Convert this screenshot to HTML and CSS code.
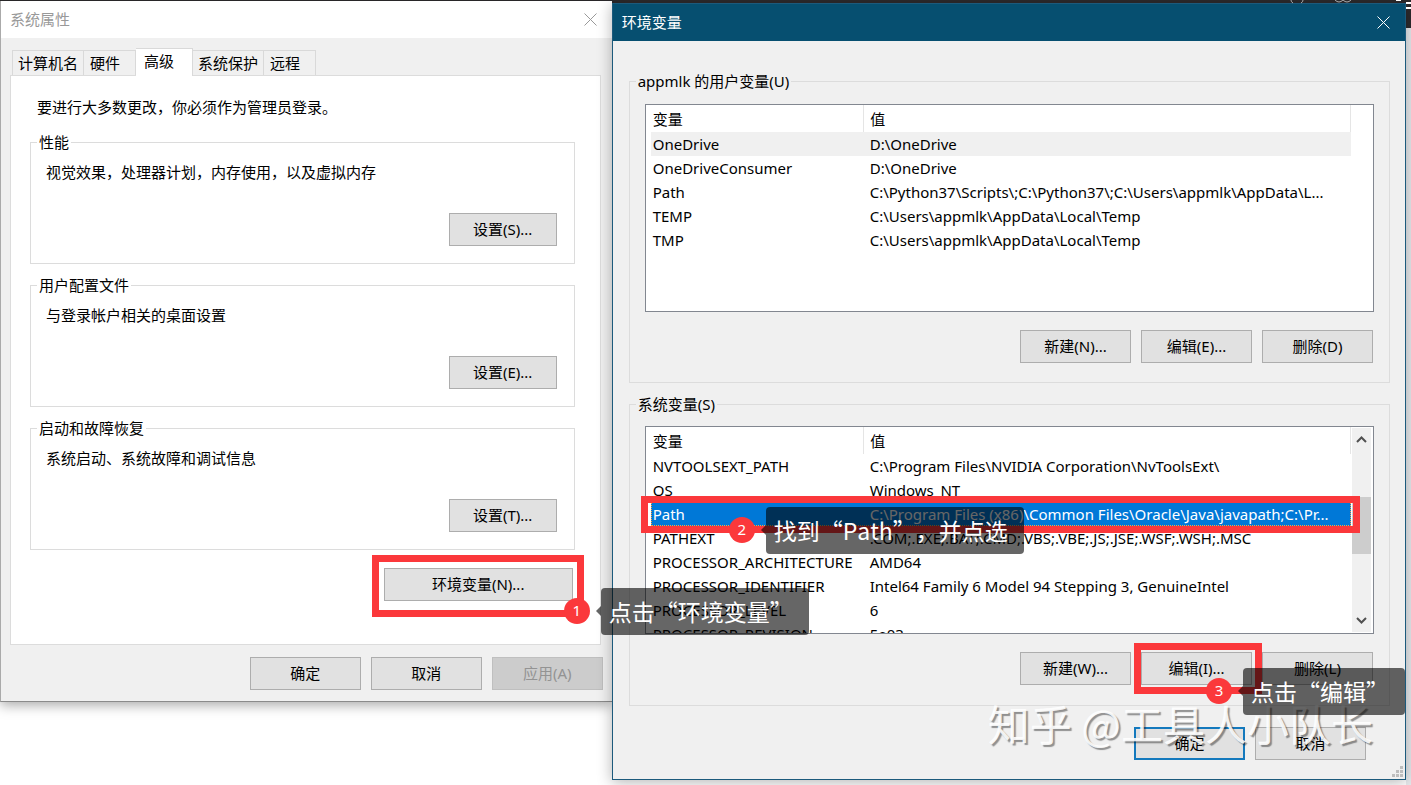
FILE: index.html
```html
<!DOCTYPE html>
<html lang="zh-CN">
<head>
    <meta charset="UTF-8">
    <meta name="viewport" content="width=device-width, initial-scale=1.0">
    <title>环境变量</title>
    <link rel="stylesheet" href="styles.css">
</head>
<body>

    <div class="desktop">
        <section class="window system">
            <header class="titlebar">
                <h1>系统属性</h1>
                <button class="close" type="button" aria-label="关闭">
                    <svg viewBox="0 0 13 13" width="13" height="13"><path d="M.5 .5l12 12M12.5 .5l-12 12"/></svg>
                </button>
            </header>

            <div class="system-body">
                <div class="tabs" role="tablist">
                    <button class="tab tab-name" type="button" role="tab">计算机名</button>
                    <button class="tab" type="button" role="tab">硬件</button>
                    <button class="tab active" type="button" role="tab" aria-selected="true">高级</button>
                    <button class="tab tab-protect" type="button" role="tab">系统保护</button>
                    <button class="tab" type="button" role="tab">远程</button>
                </div>

                <div class="pane">
                    <p class="notice">要进行大多数更改，你必须作为管理员登录。</p>
                    <fieldset class="group">
                        <legend>性能</legend>
                        <p>视觉效果，处理器计划，内存使用，以及虚拟内存</p>
                        <button class="btn" type="button">设置(S)...</button>
                    </fieldset>
                    <fieldset class="group">
                        <legend>用户配置文件</legend>
                        <p>与登录帐户相关的桌面设置</p>
                        <button class="btn" type="button">设置(E)...</button>
                    </fieldset>
                    <fieldset class="group">
                        <legend>启动和故障恢复</legend>
                        <p>系统启动、系统故障和调试信息</p>
                        <button class="btn" type="button">设置(T)...</button>
                    </fieldset>
                    <div class="env">
                        <button class="btn btn-env" type="button">环境变量(N)...</button>
                        <div class="mark mark-env">
                            <span class="badge">1</span>
                            <span class="callout">点击“环境变量”</span>
                        </div>
                    </div>
                </div>

                <div class="actions">
                    <button class="btn" type="button">确定</button>
                    <button class="btn" type="button">取消</button>
                    <button class="btn" type="button" disabled>应用(A)</button>
                </div>
            </div>
        </section>

        <section class="window variables">
            <header class="titlebar">
                <h1>环境变量</h1>
                <button class="close" type="button" aria-label="关闭">
                    <svg viewBox="0 0 13 13" width="13" height="13"><path d="M.5 .5l12 12M12.5 .5l-12 12"/></svg>
                </button>
            </header>

            <div class="variables-body">
                <fieldset class="group">
                    <legend>appmlk 的用户变量(U)</legend>
                    <div class="list">
                        <div class="rows">
                            <table>
                                <thead>
                                    <tr><th class="name">变量</th><th>值</th></tr>
                                </thead>
                                <tbody>
                                    <tr class="current"><td>OneDrive</td><td>D:\OneDrive</td></tr>
                                    <tr><td>OneDriveConsumer</td><td>D:\OneDrive</td></tr>
                                    <tr><td>Path</td><td>C:\Python37\Scripts\;C:\Python37\;C:\Users\appmlk\AppData\L...</td></tr>
                                    <tr><td>TEMP</td><td>C:\Users\appmlk\AppData\Local\Temp</td></tr>
                                    <tr><td>TMP</td><td>C:\Users\appmlk\AppData\Local\Temp</td></tr>
                                </tbody>
                            </table>
                        </div>
                    </div>
                    <div class="actions">
                        <button class="btn" type="button">新建(N)...</button>
                        <button class="btn" type="button">编辑(E)...</button>
                        <button class="btn" type="button">删除(D)</button>
                    </div>
                </fieldset>

                <fieldset class="group group-system">
                    <legend>系统变量(S)</legend>
                    <div class="list">
                        <div class="rows scrollable">
                            <table>
                                <thead>
                                    <tr><th class="name">变量</th><th>值</th></tr>
                                </thead>
                                <tbody>
                                    <tr><td>NVTOOLSEXT_PATH</td><td>C:\Program Files\NVIDIA Corporation\NvToolsExt\</td></tr>
                                    <tr><td>OS</td><td>Windows_NT</td></tr>
                                    <tr class="selected"><td>Path</td><td>C:\Program Files (x86)\Common Files\Oracle\Java\javapath;C:\Pr...</td></tr>
                                    <tr><td>PATHEXT</td><td>.COM;.EXE;.BAT;.CMD;.VBS;.VBE;.JS;.JSE;.WSF;.WSH;.MSC</td></tr>
                                    <tr><td>PROCESSOR_ARCHITECTURE</td><td>AMD64</td></tr>
                                    <tr><td>PROCESSOR_IDENTIFIER</td><td>Intel64 Family 6 Model 94 Stepping 3, GenuineIntel</td></tr>
                                    <tr><td>PROCESSOR_LEVEL</td><td>6</td></tr>
                                    <tr><td>PROCESSOR_REVISION</td><td>5e03</td></tr>
                                </tbody>
                            </table>
                        </div>
                        <div class="scrollbar">
                            <button type="button" aria-label="向上滚动">
                                <svg viewBox="0 0 11 8" width="11" height="8"><path d="M1 7l4.500-4.500L10 7"/></svg>
                            </button>
                            <span class="thumb"></span>
                            <button type="button" aria-label="向下滚动">
                                <svg viewBox="0 0 11 8" width="11" height="8"><path d="M1 1l4.500 4.500L10 1"/></svg>
                            </button>
                        </div>
                        <div class="mark mark-path">
                            <span class="badge">2</span>
                            <span class="callout">找到“Path”，并点选</span>
                        </div>
                    </div>
                    <div class="actions">
                        <button class="btn" type="button">新建(W)...</button>
                        <div class="edit">
                            <button class="btn" type="button">编辑(I)...</button>
                            <div class="mark mark-edit">
                                <span class="badge">3</span>
                                <span class="callout">点击“编辑”</span>
                            </div>
                        </div>
                        <button class="btn" type="button">删除(L)</button>
                    </div>
                </fieldset>

                <div class="actions confirm">
                    <button class="btn default" type="button">确定</button>
                    <button class="btn" type="button">取消</button>
                </div>
                <p class="watermark">知乎 @工具人小队长</p>
                <svg class="grip" viewBox="0 0 12 12" width="12" height="12"><path d="M8 0h3v3H8zM4 4h3v3H4zM8 4h3v3H8zM0 8h3v3H0zM4 8h3v3H4zM8 8h3v3H8z"/></svg>
            </div>
        </section>

        <!-- browser window peeking out behind the dialogs -->
        <svg class="behind" viewBox="0 0 121 28" width="121" height="28">
            <path d="M1 0q0 2 2 3M13 0q0 2-2 3M45 0q4 4 8 0q4 4 8 0" stroke="#aaa"/>
            <path d="M106 0h5M116 3h5M116 8h5" stroke="#fff" stroke-width="2"/>
        </svg>
    </div>

</body>
</html>
```
FILE: styles.css
```css
* {
    margin: 0;
    padding: 0;
    box-sizing: border-box;
}

body {
    font-family: "Noto Sans", "Noto Sans CJK SC", sans-serif;
    font-size: 15px;
    line-height: 20px;
    color: #000;
    background-color: #fff;
}

button {
    font: inherit;
    color: inherit;
}

.desktop {
    position: relative;
    display: flex;
    align-items: flex-start;
    min-height: 100vh;
    padding-right: 5px;
    overflow: hidden;
    background: linear-gradient(#2d2b2d, #2d2b2d) 0 0 / 100% 1px no-repeat,
        linear-gradient(#2d2b2d, #2d2b2d) 100% 0 / 799px 28px no-repeat,
        linear-gradient(#e8ebee, #e8ebee) 100% 0 / 5px 100% no-repeat;
}

.behind {
    position: absolute;
    top: 0;
    right: 0;
    fill: none;
}

/* windows */
.window {
    min-width: 0;
    background-color: #f0f0f0;
}

.system {
    flex: 612;
    margin-top: 1px;
    border-left: 1px solid #aaa;
    border-bottom: 1px solid #8a8a8a;
    box-shadow: 0 3px 12px rgba(0, 0, 0, 0.35);
}

.variables {
    flex: 794;
    margin-top: 3px;
    border: 1px solid #1c5a7c;
    box-shadow: 0 2px 14px rgba(0, 0, 0, 0.3);
}

.titlebar {
    display: flex;
    align-items: center;
    justify-content: space-between;
    height: 37px;
    padding: 0 15px 1px 9px;
    background-color: #fff;
    color: #999;
}

.titlebar h1 {
    font-size: 15px;
    font-weight: normal;
}

.variables .titlebar {
    background-color: #064f70;
    color: #fff;
}

.close {
    display: flex;
    border: none;
    background: none;
}

.close svg {
    fill: none;
    stroke: currentColor;
}

/* tabs */
.system-body {
    padding: 10px 9px 11px;
}

.tabs {
    display: flex;
    align-items: flex-end;
    padding-left: 2px;
}

.tab {
    width: 52px;
    height: 25px;
    padding-left: 6px;
    border: 1px solid #d9d9d9;
    border-bottom: none;
    border-left: none;
    background-color: #f0f0f0;
    text-align: left;
}

.tab-name {
    width: 72px;
    padding-left: 5px;
    border-left: 1px solid #d9d9d9;
}

.tab-protect {
    width: 71px;
    padding-left: 5px;
    white-space: nowrap;
}

.tab.active {
    width: 57px;
    height: 28px;
    margin-bottom: -1px;
    padding-bottom: 4px;
    padding-left: 8px;
    background-color: #fff;
}

.pane {
    margin-right: 2px;
    padding: 21px 25px 43px 19px;
    border: 1px solid #dcdcdc;
    background-color: #fff;
}

.notice {
    margin-bottom: 15px;
    padding-left: 7px;
}

.group {
    min-width: 0;
    border: 1px solid #dcdcdc;
}

.group legend {
    margin-left: -9px;
    padding: 0 2px;
    line-height: 20px;
}

.system .group {
    display: flex;
    flex-direction: column;
    margin-bottom: 11px;
    padding: 10px 17px 17px 15px;
}

.system .group p {
    margin-bottom: 31px;
}

.system .group .btn {
    width: 108px;
    align-self: flex-end;
}

/* buttons */
.btn {
    width: 111px;
    height: 33px;
    padding-bottom: 2px;
    border: 1px solid #adadad;
    background-color: #e1e1e1;
    text-align: center;
}

.btn:hover {
    border-color: #0078d7;
}

.btn:disabled {
    border-color: #bfbfbf;
    background-color: #ccc;
    color: #939393;
}

.btn.default {
    border: 2px solid #1479bd;
}

.btn-env {
    width: 189px;
}

.actions {
    display: flex;
    justify-content: flex-end;
    gap: 10px;
}

.system-body .actions {
    margin-top: 12px;
}

.env {
    position: relative;
    width: 189px;
    margin-top: 18px;
    margin-right: 2px;
    margin-left: auto;
}

/* variables window */
.variables-body {
    position: relative;
    padding: 30px 15px 19px 16px;
}

.variables .group {
    margin-bottom: 11px;
    padding: 13px 15px 19px;
}

.variables .group-system {
    padding-top: 12px;
    padding-bottom: 20px;
}

.variables .group .actions {
    padding-right: 1px;
}

.list {
    position: relative;
    display: flex;
    height: 208px;
    margin-bottom: 18px;
    border: 1px solid #828790;
    background-color: #fff;
}

.rows {
    flex: 1;
    min-width: 0;
    overflow: hidden;
    padding-right: 22px;
    padding-left: 5px;
}

.rows.scrollable {
    padding-right: 1px;
}

table {
    width: 100%;
    table-layout: fixed;
    border-collapse: collapse;
}

th,
td {
    height: 24px;
    padding-left: 2px;
    font-weight: normal;
    text-align: left;
    white-space: nowrap;
}

th {
    height: 27px;
    border-right: 1px solid #e5e5e5;
}

.name {
    width: 213px;
}

th + th,
td + td {
    padding-left: 6px;
}

.current {
    background-color: #f0f0f0;
}

.selected {
    background-color: #0078d7;
    color: #fff;
    outline: 1px dotted #ffa040;
    outline-offset: -1px;
}

.scrollbar {
    display: flex;
    flex: none;
    flex-direction: column;
    width: 19px;
    margin: 1px 2px 1px 0;
    background-color: #f0f0f0;
}

.scrollbar button {
    display: flex;
    align-items: center;
    justify-content: center;
    height: 22px;
    border: none;
    background: none;
}

.scrollbar svg {
    fill: none;
    stroke: #505050;
    stroke-width: 2;
}

.thumb {
    height: 57px;
    margin-top: 47px;
    margin-bottom: auto;
    background-color: #cdcdcd;
}

.edit {
    position: relative;
}

.confirm {
    margin-top: 21px;
    padding-right: 24px;
}

.grip {
    position: absolute;
    right: 1px;
    bottom: 1px;
    fill: #bdbdbd;
}

/* numbered steps */
.mark {
    position: absolute;
    z-index: 2;
    border: 7px solid #fb383b;
}

.mark-env {
    top: -13px;
    right: -11px;
    bottom: -16px;
    left: -12px;
}

.mark-path {
    top: 69px;
    right: 13px;
    left: -5px;
    height: 37px;
}

.mark-edit {
    top: -9px;
    right: -10px;
    bottom: -9px;
    left: -7px;
}

.badge {
    position: absolute;
    width: 26px;
    height: 26px;
    border-radius: 50%;
    background-color: #fb383b;
    color: #fff;
    line-height: 24px;
    text-align: center;
}

.callout {
    position: absolute;
    height: 47px;
    padding: 0 16px 0 8px;
    border-radius: 4px;
    background-color: rgba(0, 0, 0, 0.6);
    color: #fff;
    font-family: "Noto Sans CJK SC", sans-serif;
    font-size: 23px;
    line-height: 47px;
    white-space: nowrap;
    text-spacing-trim: space-all;
    font-kerning: none;
}

.callout::before {
    content: "";
    position: absolute;
    top: 18px;
    left: -5px;
    border: 5px solid transparent;
    border-right-color: rgba(0, 0, 0, 0.6);
    border-left: none;
}

.mark-env .badge {
    right: -13px;
    bottom: -14px;
}

.mark-env .callout {
    top: 26px;
    left: 222px;
}

.mark-path .badge {
    top: 14px;
    left: 81px;
}

.mark-path .callout {
    top: 4px;
    left: 118px;
}

.mark-edit .badge {
    right: 23px;
    bottom: -17px;
}

.mark-edit .callout {
    top: 18px;
    left: 102px;
}

.watermark {
    position: absolute;
    right: 32px;
    bottom: 31px;
    z-index: 1;
    color: rgba(255, 255, 255, 0.9);
    font-family: "Noto Sans CJK SC", sans-serif;
    font-size: 42px;
    line-height: 50px;
    text-shadow: 2px 2px 1px rgba(0, 0, 0, 0.4);
    white-space: nowrap;
}
```
